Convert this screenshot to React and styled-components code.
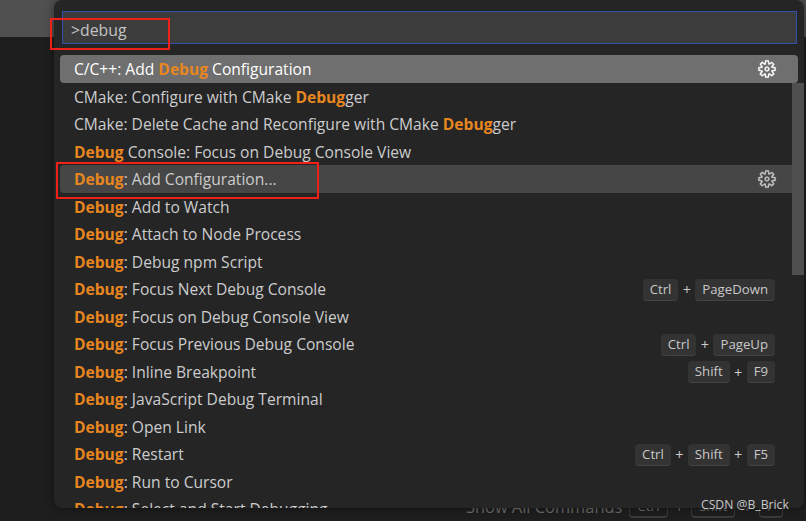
import React from "react";
import styled, { createGlobalStyle } from "styled-components";

const Global = createGlobalStyle`
  html, body { margin: 0; padding: 0; background: #1e1e1e; }
  body { font-family: "Open Sans", "Liberation Sans", sans-serif; overflow: hidden; }
`;

const Page = styled.div`
  position: relative;
  width: 806px;
  height: 521px;
  overflow: hidden;
  background: #1e1e1e;
`;
const TitleBar = styled.div`
  height: 37px;
  background: #505050;
`;
const Behind = styled.div`
  position: absolute;
  left: 466px;
  top: 495px;
  display: flex;
  align-items: center;
  gap: 7px;
  color: #6a6a6a;
  font-size: 16.4px;
  white-space: nowrap;
`;
const BehindKey = styled.span`
  height: 20px;
  padding: 0 7px;
  border: 1px solid #3a3a3a;
  border-bottom-width: 2px;
  border-radius: 4px;
  font-size: 13.5px;
  line-height: 20px;
`;
const Palette = styled.div`
  position: absolute;
  left: 54px;
  top: 0;
  width: 750px;
  height: 508px;
  background: #252526;
  border-radius: 8px;
  box-shadow: 0 0 10px rgba(0, 0, 0, 0.45);
  overflow: hidden;
`;
const InputWrap = styled.div`
  padding: 11px 7px 0 8px;
  height: 44px;
  box-sizing: border-box;
`;
const Input = styled.div`
  height: 33px;
  box-sizing: border-box;
  border: 1px solid #2f4fae;
  background: #3c3c3c;
  padding: 3px 0 0 8px;
  color: #c4c4c4;
  font-size: 15.8px;
  line-height: 30px;
`;
const List = styled.div`
  margin: 11px 6px 0 6px;
  height: 453px;
  overflow: hidden;
`;
const Row = styled.div`
  display: flex;
  align-items: center;
  justify-content: space-between;
  height: 27.5px;
  box-sizing: border-box;
  padding: 0 21px 0 14px;
  border-radius: 4px;
  color: ${(p) => (p.$tone === "active" ? "#ffffff" : "#cccccc")};
  background: ${(p) =>
    p.$tone === "active" ? "#6f6f6f" : p.$tone === "hover" ? "#464646" : "transparent"};
  font-size: 15.6px;
  white-space: nowrap;
`;
const Label = styled.span`
  display: block;
  padding-top: 1px;
`;
const Mark = styled.b`
  color: #e8861f;
  font-weight: 700;
`;
const Gear = styled.svg`
  width: 20px;
  height: 20px;
  fill: ${(p) => (p.$bright ? "#ffffff" : "#c5c5c5")};
  stroke: ${(p) => (p.$bright ? "#ffffff" : "#c5c5c5")};
  stroke-width: 0.2;
`;
const Keys = styled.div`
  display: flex;
  align-items: center;
  margin: 2px 2px 0 0;
  color: #cccccc;
`;
const Key = styled.span`
  height: 22px;
  box-sizing: border-box;
  padding: 0 7px;
  background: #333334;
  border-bottom: 1px solid #444;
  border-radius: 4px;
  font-size: 13.2px;
  line-height: 21px;
  color: #c8c8c8;
`;
const Plus = styled.span`
  width: 17px;
  text-align: center;
  font-size: 14.5px;
  color: #cccccc;
`;
const Scroll = styled.div`
  position: absolute;
  right: 0;
  top: 83px;
  width: 12px;
  height: 192px;
  background: #4f4f4f;
`;
const RedBox = styled.div`
  position: absolute;
  left: ${(p) => p.$x}px;
  top: ${(p) => p.$y}px;
  width: ${(p) => p.$w}px;
  height: ${(p) => p.$h}px;
  box-sizing: border-box;
  border: 2px solid #f02018;
`;
const Watermark = styled.div`
  position: absolute;
  left: 701px;
  top: 496px;
  color: #c8c8c8;
  font-family: "Open Sans", sans-serif;
  font-size: 12.2px;
  line-height: 18px;
`;

const GEAR =
  "M9.1 4.4L8.6 2H7.4l-.5 2.4-.7.3-2-1.3-.9.8 1.3 2-.2.7-2.4.5v1.2l2.4.5.3.8-1.3 2 .8.8 2-1.3.8.3.4 2.3h1.2l.5-2.4.8-.3 2 1.3.8-.8-1.3-2 .3-.8 2.3-.4V7.4l-2.4-.5-.3-.8 1.3-2-.8-.8-2 1.3-.7-.2zM9.4 1l.5 2.4L12 2.1l2 2-1.4 2.1 2.4.4v2.8l-2.4.5L14 12l-2 2-2.1-1.4-.5 2.4H6.6l-.5-2.4L4 13.9l-2-2 1.4-2.1L1 9.4V6.6l2.4-.5L2.1 4l2-2 2.1 1.4.4-2.4h2.8zm.6 7c0 1.1-.9 2-2 2s-2-.9-2-2 .9-2 2-2 2 .9 2 2zM8 9c.6 0 1-.4 1-1s-.4-1-1-1-1 .4-1 1 .4 1 1 1z";

const rows = [
  { parts: ["C/C++: Add ", "*Debug", " Configuration"], tone: "active", gear: true },
  { parts: ["CMake: Configure with CMake ", "*Debug", "ger"] },
  { parts: ["CMake: Delete Cache and Reconfigure with CMake ", "*Debug", "ger"] },
  { parts: ["*Debug", " Console: Focus on Debug Console View"] },
  { parts: ["*Debug", ": Add Configuration..."], tone: "hover", gear: true },
  { parts: ["*Debug", ": Add to Watch"] },
  { parts: ["*Debug", ": Attach to Node Process"] },
  { parts: ["*Debug", ": Debug npm Script"] },
  { parts: ["*Debug", ": Focus Next Debug Console"], keys: ["Ctrl", "PageDown"] },
  { parts: ["*Debug", ": Focus on Debug Console View"] },
  { parts: ["*Debug", ": Focus Previous Debug Console"], keys: ["Ctrl", "PageUp"] },
  { parts: ["*Debug", ": Inline Breakpoint"], keys: ["Shift", "F9"] },
  { parts: ["*Debug", ": JavaScript Debug Terminal"] },
  { parts: ["*Debug", ": Open Link"] },
  { parts: ["*Debug", ": Restart"], keys: ["Ctrl", "Shift", "F5"] },
  { parts: ["*Debug", ": Run to Cursor"] },
  { parts: ["*Debug", ": Select and Start Debugging"] },
];

export default function App() {
  return (
    <Page>
      <Global />
      <TitleBar />
      <Behind>
        Show All Commands
        <BehindKey>Ctrl</BehindKey>+<BehindKey>Shift</BehindKey>+<BehindKey>P</BehindKey>
      </Behind>
      <Palette>
        <InputWrap>
          <Input>&gt;debug</Input>
        </InputWrap>
        <List>
          {rows.map((r, i) => (
            <Row key={i} $tone={r.tone}>
              <Label>
                {r.parts.map((t, j) =>
                  t[0] === "*" ? <Mark key={j}>{t.slice(1)}</Mark> : <span key={j}>{t}</span>
                )}
              </Label>
              {r.gear && (
                <Gear viewBox="0 0 16 16" $bright={r.tone === "active"}>
                  <path fillRule="evenodd" d={GEAR} />
                </Gear>
              )}
              {r.keys && (
                <Keys>
                  {r.keys.map((k, j) => (
                    <React.Fragment key={k}>
                      {j > 0 && <Plus>+</Plus>}
                      <Key>{k}</Key>
                    </React.Fragment>
                  ))}
                </Keys>
              )}
            </Row>
          ))}
        </List>
        <Scroll />
      </Palette>
      <RedBox $x={50} $y={18} $w={120} $h={32} />
      <RedBox $x={56} $y={162} $w={263} $h={37} />
      <Watermark>CSDN @B_Brick</Watermark>
    </Page>
  );
}
